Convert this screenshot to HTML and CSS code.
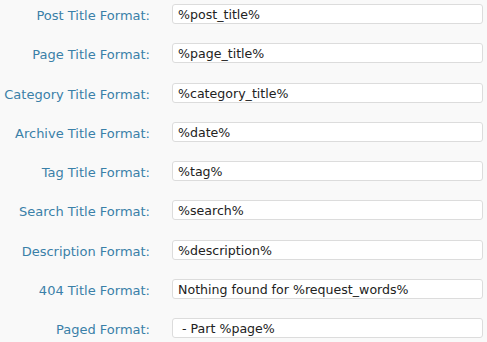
FILE: index.html
```html
<!DOCTYPE html>
<html lang="en">
<head>
    <meta charset="UTF-8">
    <title>Title Formats</title>
    <link rel="stylesheet" href="styles.css">
</head>
<body>
    <div class="form">
        <div class="row"><label class="label">Post Title Format:</label><input class="field" type="text" value="%post_title%"></div>
        <div class="row"><label class="label">Page Title Format:</label><input class="field" type="text" value="%page_title%"></div>
        <div class="row"><label class="label">Category Title Format:</label><input class="field" type="text" value="%category_title%"></div>
        <div class="row"><label class="label">Archive Title Format:</label><input class="field" type="text" value="%date%"></div>
        <div class="row"><label class="label">Tag Title Format:</label><input class="field" type="text" value="%tag%"></div>
        <div class="row"><label class="label">Search Title Format:</label><input class="field" type="text" value="%search%"></div>
        <div class="row"><label class="label">Description Format:</label><input class="field" type="text" value="%description%"></div>
        <div class="row"><label class="label">404 Title Format:</label><input class="field" type="text" value="Nothing found for %request_words%"></div>
        <div class="row"><label class="label">Paged Format:</label><input class="field" type="text" value=" - Part %page%"></div>
    </div>
</body>
</html>
```

FILE: styles.css
```css
body {
    margin: 0;
    background-color: #f9f9f9;
    font-family: "DejaVu Sans", Verdana, sans-serif;
    font-size: 12px;
}
.form {
    display: flex;
    flex-direction: column;
    gap: 19.25px;
    padding-top: 4px;
}
.row {
    display: flex;
    align-items: flex-start;
    height: 20px;
}
.label {
    width: 150px;
    padding-top: 4px;
    text-align: right;
    color: #3a80a8;
    font-size: 13px;
    white-space: nowrap;
}
.field {
    box-sizing: border-box;
    margin-left: 22px;
    width: 311px;
    height: 20px;
    padding: 1px 5px 0;
    border: 1px solid #dcdcdc;
    border-radius: 3px;
    background-color: #fff;
    font-family: "DejaVu Sans", Verdana, sans-serif;
    font-size: 12.6px;
    color: #222;
}
```
